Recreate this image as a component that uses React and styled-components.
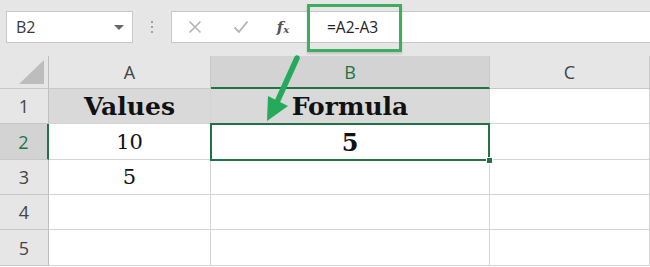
import styled, { createGlobalStyle } from 'styled-components'

const GlobalStyle = createGlobalStyle`
  * { box-sizing: border-box; }
  html, body { margin: 0; padding: 0; background: #fff; }
  body { width: 650px; height: 267px; overflow: hidden; font-family: "Open Sans", "Liberation Sans", sans-serif; }
`

const rows = [
    { n: 1, a: 'Values', b: 'Formula', head: true },
    { n: 2, a: '10', b: '5', active: true },
    { n: 3, a: '5', b: '' },
    { n: 4, a: '', b: '' },
    { n: 5, a: '', b: '' },
]

function App() {
    return (
        <Page>
            <GlobalStyle />
            <Toolbar>
                <NameBox>
                    <span>B2</span>
                    <Caret />
                </NameBox>
                <Dots>
                    <i /><i /><i />
                </Dots>
                <FormulaBar>
                    <IconBtn w={46}>
                        <svg width="14" height="14" viewBox="0 0 14 14">
                            <path d="M1.5 1.5 L12.5 12.5 M12.5 1.5 L1.5 12.5" stroke="#b3b3b3" strokeWidth="1.6" fill="none" />
                        </svg>
                    </IconBtn>
                    <IconBtn w={46}>
                        <svg width="16" height="14" viewBox="0 0 16 14">
                            <path d="M1.5 7.5 L6 12 L14.5 1.5" stroke="#b3b3b3" strokeWidth="1.8" fill="none" />
                        </svg>
                    </IconBtn>
                    <IconBtn w={38}>
                        <Fx>f<sub>x</sub></Fx>
                    </IconBtn>
                    <FormulaText>
                        =A2-A3
                        <Highlight />
                    </FormulaText>
                </FormulaBar>
            </Toolbar>

            <Sheet>
                <Corner>
                    <svg width="26" height="25" viewBox="0 0 26 25">
                        <polygon points="25,0 25,24 0,24" fill="#bdbdbd" />
                    </svg>
                </Corner>
                <ColHead>A</ColHead>
                <ColHead selected>B</ColHead>
                <ColHead>C</ColHead>

                {rows.map((r) => (
                    <Row key={r.n} r={r} />
                ))}

                <Arrow viewBox="0 0 60 80" width="60" height="80">
                    <path d="M38 2 L19 44" stroke="#25a95a" strokeWidth="5.5" strokeLinecap="round" fill="none" />
                    <polygon points="8,65 9,40 29,50" fill="#25a95a" />
                </Arrow>
            </Sheet>
        </Page>
    )
}

function Row({ r }) {
    return (
        <>
            <RowHead selected={r.active}>{r.n}</RowHead>
            <Cell fill={r.head}>
                <CellText bold={r.head} size={r.head ? 25 : 21}>{r.a}</CellText>
            </Cell>
            <Cell fill={r.head} active={r.active}>
                <CellText bold size={r.head ? 25 : 24}>{r.b}</CellText>
                {r.active && <Handle />}
            </Cell>
            <Cell />
        </>
    )
}

const Page = styled.div`
    width: 650px;
    height: 267px;
    display: flex;
    flex-direction: column;
    background: #fff;
`

const Toolbar = styled.div`
    height: 56px;
    flex: none;
    display: flex;
    align-items: flex-start;
    padding: 11px 0 0 6px;
    background: #e6e6e6;
`

const NameBox = styled.div`
    width: 127px;
    height: 32px;
    background: #fff;
    border: 1px solid #c8c8c8;
    display: flex;
    align-items: center;
    justify-content: space-between;
    padding: 0 8px 0 9px;
    font-size: 16px;
    color: #3a3a3a;
`

const Caret = styled.span`
    width: 0;
    height: 0;
    border-left: 5px solid transparent;
    border-right: 5px solid transparent;
    border-top: 5px solid #666;
`

const Dots = styled.div`
    width: 38px;
    height: 32px;
    display: flex;
    flex-direction: column;
    align-items: center;
    justify-content: center;
    gap: 3px;

    i {
        width: 2px;
        height: 2px;
        background: #8a8a8a;
        border-radius: 1px;
    }
`

const FormulaBar = styled.div`
    flex: 1;
    height: 32px;
    background: #fff;
    border: 1px solid #c8c8c8;
    border-right: none;
    display: flex;
    align-items: center;
`

const IconBtn = styled.div`
    width: ${({ w }) => w}px;
    height: 100%;
    display: flex;
    align-items: center;
    justify-content: center;
`

const Fx = styled.span`
    font-family: "DejaVu Serif", "Liberation Serif", serif;
    font-style: italic;
    font-weight: bold;
    font-size: 15px;
    color: #555;

    sub {
        font-size: 10px;
        vertical-align: -1px;
    }
`

const FormulaText = styled.div`
    position: relative;
    height: 100%;
    display: flex;
    align-items: center;
    padding-left: 25px;
    font-size: 15.5px;
    color: #222;
`

const Highlight = styled.span`
    position: absolute;
    left: 5px;
    top: -8px;
    width: 95px;
    height: 48px;
    border: 3px solid #3dae5e;
    box-shadow: 0 2px 2px rgba(0, 0, 0, 0.15);
`

const Sheet = styled.div`
    position: relative;
    flex: 1;
    display: grid;
    grid-template-columns: 49px 162px 279px 1fr;
    grid-template-rows: 33px 35px 36px 35px 35px 36px;
`

const Corner = styled.div`
    background: #e6e6e6;
    border-right: 1px solid #bfbfbf;
    border-bottom: 1px solid #c8c8c8;
    display: flex;
    align-items: flex-end;
    justify-content: flex-end;
    padding: 0 3px 3px 0;
`

const ColHead = styled.div`
    background: ${({ selected }) => (selected ? '#d3d3d3' : '#e6e6e6')};
    color: ${({ selected }) => (selected ? '#217346' : '#444')};
    border-right: 1px solid #c8c8c8;
    border-bottom: ${({ selected }) => (selected ? '2px solid #217346' : '1px solid #c8c8c8')};
    display: flex;
    align-items: center;
    justify-content: center;
    font-size: 18px;
`

const RowHead = styled.div`
    background: ${({ selected }) => (selected ? '#d3d3d3' : '#e6e6e6')};
    color: ${({ selected }) => (selected ? '#217346' : '#444')};
    border-right: ${({ selected }) => (selected ? '2px solid #217346' : '1px solid #bfbfbf')};
    border-bottom: 1px solid #c8c8c8;
    display: flex;
    align-items: center;
    justify-content: center;
    font-size: 18px;
`

const Cell = styled.div`
    position: relative;
    background: ${({ fill }) => (fill ? '#d9d9d9' : '#fff')};
    border-right: 1px solid #d4d4d4;
    border-bottom: 1px solid #d4d4d4;
    display: flex;
    align-items: center;
    justify-content: center;
    ${({ active }) => active && `
        z-index: 2;
        border: 2px solid #217346;
        margin: -1px 0 -1px -1px;
    `}
`

const CellText = styled.span`
    font-family: "DejaVu Serif", "Liberation Serif", serif;
    font-weight: ${({ bold }) => (bold ? 'bold' : 'normal')};
    font-size: ${({ size }) => size}px;
    color: #111;
`

const Handle = styled.span`
    position: absolute;
    right: -5px;
    bottom: -5px;
    width: 7px;
    height: 7px;
    background: #217346;
    border: 1px solid #fff;
`

const Arrow = styled.svg`
    position: absolute;
    z-index: 3;
    left: 259px;
    top: 0;
    overflow: visible;
`

export default App
